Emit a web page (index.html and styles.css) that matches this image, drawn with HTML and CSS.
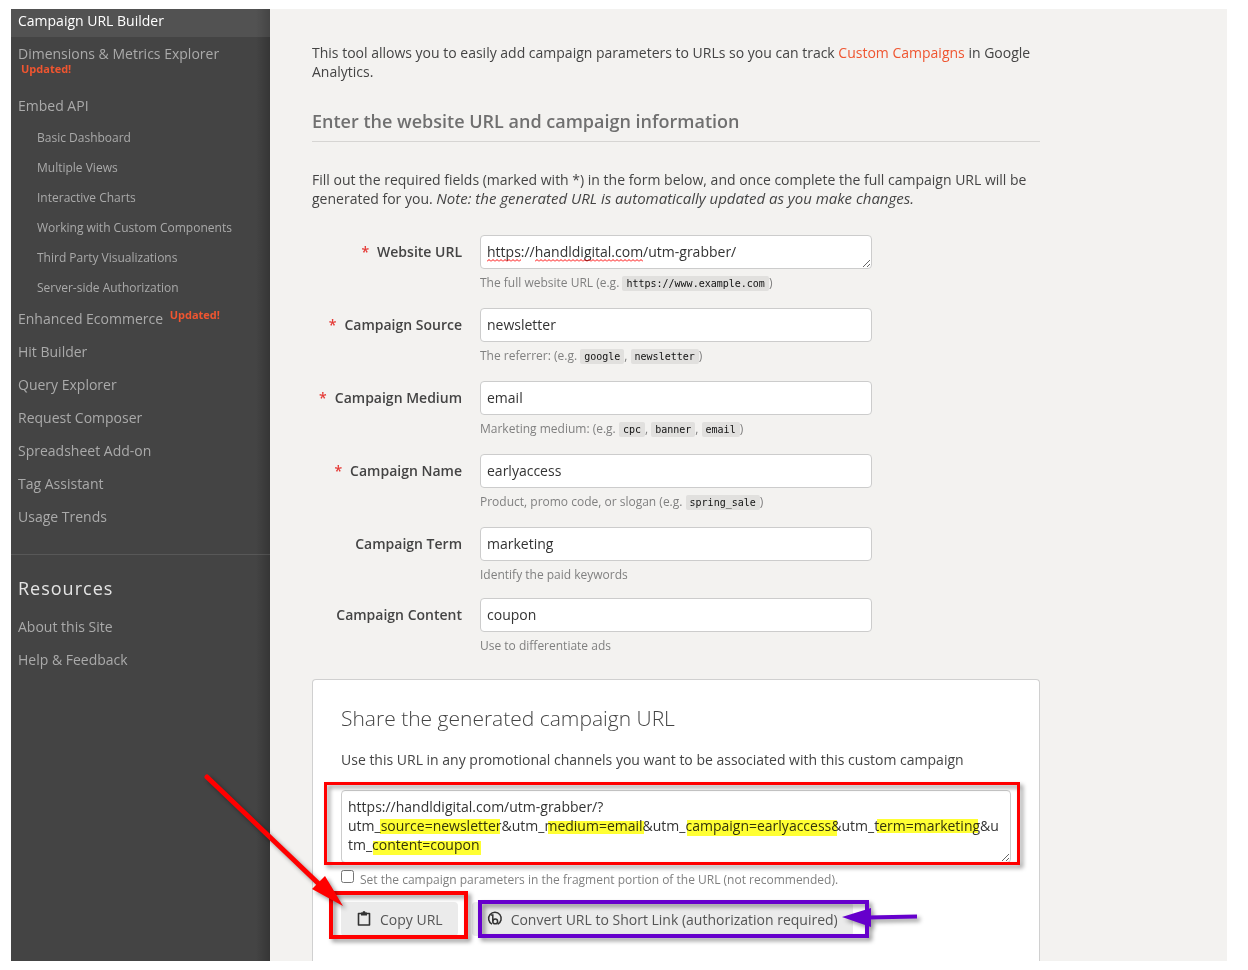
FILE: index.html
```html
<!DOCTYPE html>
<html lang="en">
  <head>
    <meta charset="utf-8" />
    <title>Campaign URL Builder</title>
    <link rel="stylesheet" href="styles.css" />
  </head>
  <body>
    <div class="page">
      <nav class="sidebar">
        <ul class="menu">
          <li><a class="menu-link active" href="#">Campaign URL Builder</a></li>
          <li><a class="menu-link" href="#">Dimensions &amp; Metrics Explorer <span class="updated">Updated!</span></a></li>
          <li>
            <a class="menu-link" href="#">Embed API</a>
            <ul class="submenu">
              <li><a class="submenu-link" href="#">Basic Dashboard</a></li>
              <li><a class="submenu-link" href="#">Multiple Views</a></li>
              <li><a class="submenu-link" href="#">Interactive Charts</a></li>
              <li><a class="submenu-link" href="#">Working with Custom Components</a></li>
              <li><a class="submenu-link" href="#">Third Party Visualizations</a></li>
              <li><a class="submenu-link" href="#">Server-side Authorization</a></li>
            </ul>
          </li>
          <li><a class="menu-link" href="#">Enhanced Ecommerce <span class="updated">Updated!</span></a></li>
          <li><a class="menu-link" href="#">Hit Builder</a></li>
          <li><a class="menu-link" href="#">Query Explorer</a></li>
          <li><a class="menu-link" href="#">Request Composer</a></li>
          <li><a class="menu-link" href="#">Spreadsheet Add-on</a></li>
          <li><a class="menu-link" href="#">Tag Assistant</a></li>
          <li><a class="menu-link" href="#">Usage Trends</a></li>
        </ul>
        <h2 class="sidebar-title">Resources</h2>
        <ul>
          <li><a class="menu-link" href="#">About this Site</a></li>
          <li><a class="menu-link" href="#">Help &amp; Feedback</a></li>
        </ul>
      </nav>

      <main class="content">
        <p>
          This tool allows you to easily add campaign parameters to URLs so you
          can track <a class="text-link" href="#">Custom Campaigns</a> in Google
          Analytics.
        </p>
        <h3 class="section-title">Enter the website URL and campaign information</h3>
        <p>
          Fill out the required fields (marked with *) in the form below, and
          once complete the full campaign URL will be generated for you.
          <em>Note: the generated URL is automatically updated as you make changes.</em>
        </p>

        <form class="form">
          <div class="field required">
            <label for="url">Website URL</label>
            <div class="control">
              <textarea class="input" id="url" rows="1" spellcheck="false">https://handldigital.com/utm-grabber/</textarea>
              <svg class="spelling" width="160" height="3">
                <defs>
                  <pattern id="wave" width="4" height="3" patternUnits="userSpaceOnUse">
                    <path d="M0 2.5 L2 .5 L4 2.5" fill="none" stroke="#f00" />
                  </pattern>
                </defs>
                <rect width="34" height="3" fill="url(#wave)" />
                <rect x="48" width="108" height="3" fill="url(#wave)" />
              </svg>
              <div class="help">The full website URL (e.g. <code>https://www.example.com</code>)</div>
            </div>
          </div>
          <div class="field required">
            <label for="source">Campaign Source</label>
            <div class="control">
              <input class="input" id="source" type="text" value="newsletter" />
              <div class="help">The referrer: (e.g. <code>google</code>, <code>newsletter</code>)</div>
            </div>
          </div>
          <div class="field required">
            <label for="medium">Campaign Medium</label>
            <div class="control">
              <input class="input" id="medium" type="text" value="email" />
              <div class="help">Marketing medium: (e.g. <code>cpc</code>, <code>banner</code>, <code>email</code>)</div>
            </div>
          </div>
          <div class="field required">
            <label for="name">Campaign Name</label>
            <div class="control">
              <input class="input" id="name" type="text" value="earlyaccess" />
              <div class="help">Product, promo code, or slogan (e.g. <code>spring_sale</code>)</div>
            </div>
          </div>
          <div class="field">
            <label for="term">Campaign Term</label>
            <div class="control">
              <input class="input" id="term" type="text" value="marketing" />
              <div class="help">Identify the paid keywords</div>
            </div>
          </div>
          <div class="field">
            <label for="content">Campaign Content</label>
            <div class="control">
              <input class="input" id="content" type="text" value="coupon" />
              <div class="help">Use to differentiate ads</div>
            </div>
          </div>
        </form>

        <section class="card">
          <h3 class="card-title">Share the generated campaign URL</h3>
          <p>Use this URL in any promotional channels you want to be associated with this custom campaign</p>
          <textarea class="input result" rows="3" spellcheck="false" aria-label="Generated URL">https://handldigital.com/utm-grabber/?utm_source=newsletter&amp;utm_medium=email&amp;utm_campaign=earlyaccess&amp;utm_term=marketing&amp;utm_content=coupon</textarea>
          <div class="check">
            <input type="checkbox" id="fragment" />
            <label for="fragment">Set the campaign parameters in the fragment portion of the URL (not recommended).</label>
          </div>
          <div class="buttons">
            <button class="button" type="button">
              <svg width="16" height="16" viewBox="0 0 16 16">
                <path d="M2.5 2.5h11v11.5h-11z" fill="none" stroke="#333" stroke-width="1.6" stroke-linejoin="round" />
                <path d="M5 1.5h1.5a1.5 1.5 0 0 1 3 0H11v3H5z" fill="#333" />
              </svg>
              Copy URL
            </button>
            <button class="button" type="button">
              <svg width="16" height="16" viewBox="0 0 16 16" fill="none" stroke="#333" stroke-width="1.5">
                <path d="M5 13.1A6.3 6.3 0 1 1 10.6 13.2" />
                <path d="M3.8 4H5.8V10.5" />
                <circle cx="8.2" cy="10.4" r="2.4" />
              </svg>
              Convert URL to Short Link (authorization required)
            </button>
          </div>

          <!-- highlighter, boxes and arrows -->
          <svg class="notes highlights" viewBox="313 680 726 280" width="726" height="280" fill="#ffff33">
            <rect x="380" y="819" width="120" height="15" />
            <rect x="548" y="821" width="96" height="13" />
            <rect x="687" y="820" width="150" height="16" />
            <rect x="877" y="819" width="101" height="14" />
            <rect x="373" y="841" width="108" height="14" />
          </svg>
          <svg class="notes" viewBox="313 680 726 280" width="726" height="280" fill="none">
            <g class="shadow" stroke="#f00">
              <rect x="325.5" y="783.5" width="693" height="80" stroke-width="3" />
              <rect x="331" y="893" width="135" height="44" stroke-width="4" />
            </g>
            <g class="shadow">
              <path d="M207 777L320 885" stroke="#f00" stroke-width="5" stroke-linecap="round" />
              <path d="M325 876L343 906L312 889z" fill="#f00" />
            </g>
            <g class="shadow">
              <rect x="480" y="902" width="387" height="34" stroke="#60c" stroke-width="4" />
              <path d="M868 917.5L917 916.5" stroke="#60c" stroke-width="4" />
              <path d="M842 917L871 908V927z" fill="#60c" />
            </g>
          </svg>
        </section>
      </main>
    </div>
  </body>
</html>
```
FILE: styles.css
```css
* {
  box-sizing: border-box;
  margin: 0;
  padding: 0;
}

body {
  background: #fff;
  color: #444;
  font-family: "Open Sans", sans-serif;
  font-size: 14px;
  line-height: 19px;
}

ul {
  list-style: none;
}

a {
  text-decoration: none;
}

em {
  font-size: 15px;
  line-height: 1;
}

.page {
  display: flex;
  height: calc(100vh - 18px);
  margin: 9px 21px 9px 11px;
  overflow: hidden;
  background: #f3f2f0;
}

/* sidebar */
.sidebar {
  flex: 0 0 259px;
  background: #444;
  background-image: linear-gradient(to left, #00000038, transparent 14px);
}

.menu {
  margin-top: -5px;
  padding-bottom: 21px;
  border-bottom: 1px solid #ffffff1c;
}

.menu-link {
  display: block;
  padding: 7px;
  color: #aaa;
}

.menu-link.active {
  background: #ffffff14;
  color: #fff;
}

.submenu-link {
  display: block;
  padding: 6px 7px 5px 26px;
  color: #aaa;
  font-size: 12px;
}

.updated {
  position: relative;
  top: -5px;
  margin-left: 3px;
  color: #ef5530;
  font-size: 11px;
  font-weight: bold;
  line-height: 1;
}

.sidebar-title {
  padding: 21px 7px 10px;
  color: #e4e4e4;
  font-size: 18px;
  font-weight: 400;
  letter-spacing: 1px;
  line-height: 24px;
}

/* main column */
.content {
  display: flex;
  flex: 0 1 812px;
  flex-direction: column;
  padding: 34px 42px 0;
}

.text-link {
  color: #ef5530;
}

.section-title {
  margin: 28px 0;
  padding-bottom: 8px;
  border-bottom: 1px solid #d6d5d3;
  color: #707070;
  font-size: 18px;
  font-weight: 600;
  line-height: 24px;
}

.form {
  margin: 27px 0 23px;
}

.field {
  display: flex;
  gap: 18px;
  margin-bottom: 13px;
}

.field.required {
  margin-bottom: 15px;
}

.field:last-child {
  margin-bottom: 0;
}

.field label {
  width: 150px;
  font-weight: 600;
  line-height: 34px;
  text-align: right;
}

.required label::before {
  content: "*";
  margin-right: 8px;
  color: #e53935;
}

.control {
  position: relative;
  width: 392px;
}

.input {
  display: block;
  width: 100%;
  height: 34px;
  padding: 6px;
  border: 1px solid #ccc;
  border-radius: 4px;
  background: #fff;
  color: #333;
  font-family: inherit;
  font-size: 14px;
  line-height: 19px;
}

input.input {
  padding-bottom: 8px;
}

.spelling {
  position: absolute;
  top: 24px;
  left: 7px;
}

.help {
  margin-top: 4px;
  color: #808080;
  font-size: 12px;
  line-height: 20px;
}

code {
  padding: 2px 4px;
  border-radius: 2px;
  background: #e1e0de;
  color: #111;
  font-family: "DejaVu Sans Mono", monospace;
  font-size: 10px;
  line-height: 1;
}

/* share card */
.card {
  position: relative;
  flex: 1 0 auto;
  padding: 24px 28px;
  border: 1px solid #d0d0d0;
  border-bottom: 0;
  border-radius: 4px 4px 0 0;
  background: #fff;
}

.card-title {
  margin-bottom: 18px;
  font-size: 21px;
  font-weight: 300;
  line-height: 28px;
}

.result {
  height: 73px;
  margin: 21px 0 7px;
  padding: 6px 8px 6px 6px;
}

.check {
  display: flex;
  gap: 6px;
  color: #808080;
  font-size: 12px;
}

.check input {
  width: 13px;
  height: 13px;
}

.buttons {
  display: flex;
  gap: 14px;
  margin-top: 13px;
}

.button {
  display: flex;
  align-items: center;
  gap: 8px;
  height: 34px;
  padding: 0 15px;
  border: 0;
  border-radius: 4px;
  background: #ebebeb;
  color: #555;
  font-family: inherit;
  font-size: 14px;
}

.notes {
  position: absolute;
  top: 0;
  left: 0;
  overflow: visible;
  pointer-events: none;
}

.highlights {
  mix-blend-mode: multiply;
}

.shadow {
  filter: drop-shadow(3px 3px 2px #00000066);
}
```
